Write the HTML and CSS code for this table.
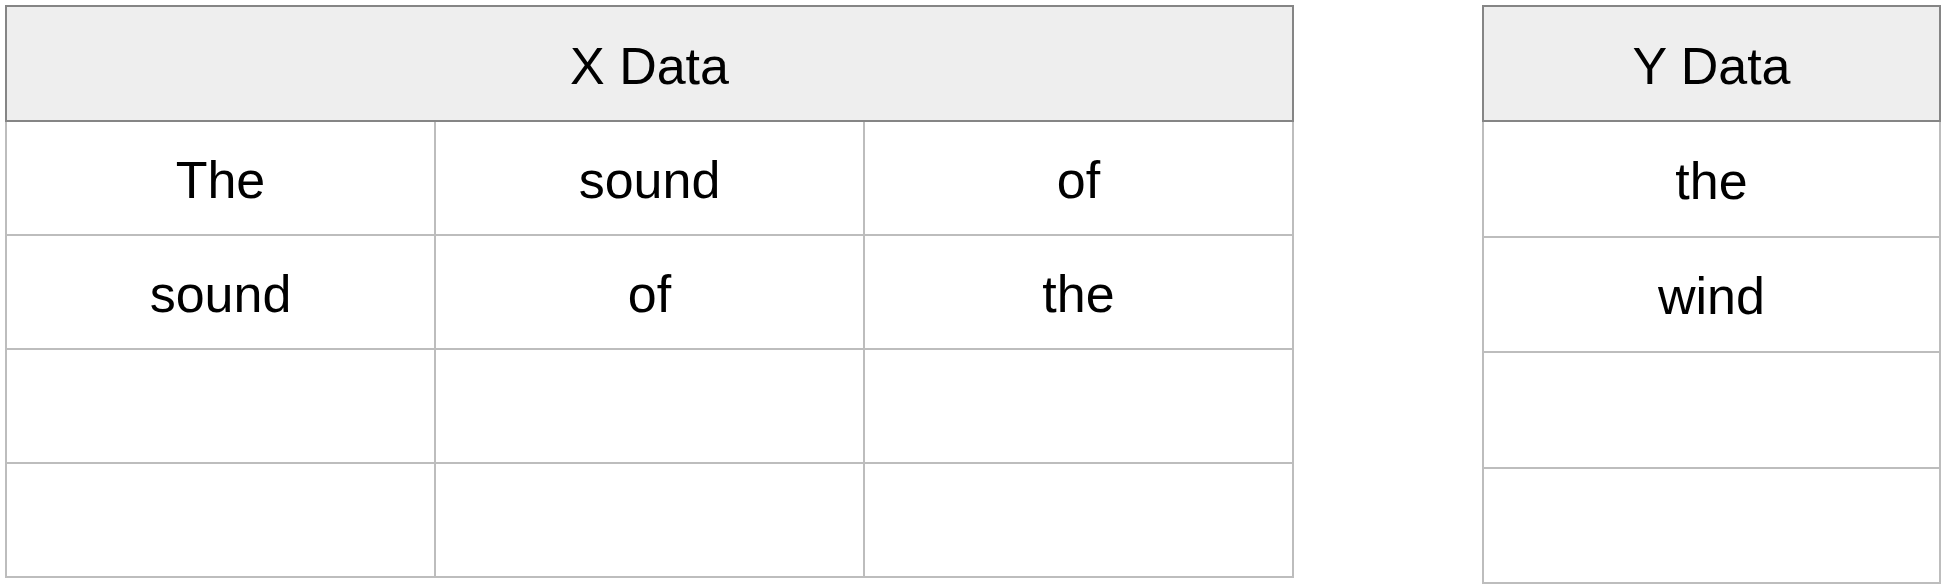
FILE: index.html
```html
<!DOCTYPE html>
<html>
<head>
<meta charset="utf-8">
<link rel="stylesheet" href="styles.css">
</head>
<body>
<div class="wrap">
  <div class="tbl tbl-x">
    <div class="head">X Data</div>
    <div class="grid grid-x">
      <div class="cell">The</div><div class="cell">sound</div><div class="cell">of</div>
      <div class="cell">sound</div><div class="cell">of</div><div class="cell">the</div>
      <div class="cell"></div><div class="cell"></div><div class="cell"></div>
      <div class="cell"></div><div class="cell"></div><div class="cell"></div>
    </div>
  </div>
  <div class="tbl tbl-y">
    <div class="head">Y Data</div>
    <div class="grid grid-y">
      <div class="cell">the</div>
      <div class="cell">wind</div>
      <div class="cell"></div>
      <div class="cell"></div>
    </div>
  </div>
</div>
</body>
</html>
```

FILE: styles.css
```css
html, body {
  margin: 0;
  padding: 0;
  background: #ffffff;
}
body {
  font-family: "Liberation Sans", Arial, sans-serif;
  color: #000;
}
.wrap {
  display: flex;
  align-items: flex-start;
  gap: 188px;
  padding: 5px 0 0 5px;
}
.tbl {
  display: flex;
  flex-direction: column;
}
.tbl-x { width: 1289px; }
.tbl-y { width: 459px; }
.head {
  box-sizing: border-box;
  height: 117px;
  padding-top: 4px;
  border: 2px solid #858585;
  background: #eeeeee;
  display: flex;
  align-items: center;
  justify-content: center;
  font-size: 52px;
}
.grid {
  display: grid;
  border-left: 2px solid #bdbdbd;
}
.grid-x {
  grid-template-columns: repeat(3, 1fr);
  grid-auto-rows: 114px;
}
.grid-y {
  grid-template-columns: 1fr;
  grid-auto-rows: 115.5px;
}
.cell {
  box-sizing: border-box;
  padding-top: 4px;
  border-right: 2px solid #bdbdbd;
  border-bottom: 2px solid #bdbdbd;
  display: flex;
  align-items: center;
  justify-content: center;
  font-size: 52px;
}
```
